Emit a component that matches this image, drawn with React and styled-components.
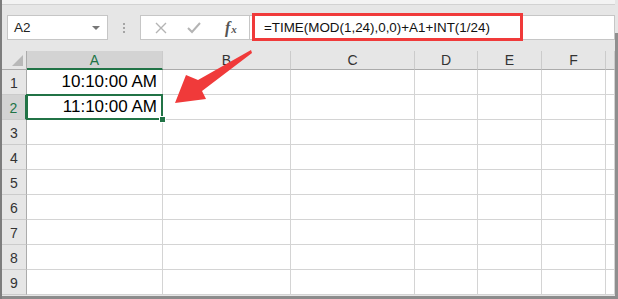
import React from 'react'
import styled, { createGlobalStyle } from 'styled-components'

const GlobalStyle = createGlobalStyle`
  html, body { margin: 0; padding: 0; background: #fff; }
  body { font-family: "Liberation Sans", Arial, sans-serif; }
`

const columns = [
  { name: 'A', width: 136 },
  { name: 'B', width: 128 },
  { name: 'C', width: 124 },
  { name: 'D', width: 63 },
  { name: 'E', width: 64 },
  { name: 'F', width: 64 },
  { name: '', width: 9 },
]

const rows = [
  { n: 1, a: '10:10:00 AM' },
  { n: 2, a: '11:10:00 AM', active: true },
  { n: 3 }, { n: 4 }, { n: 5 }, { n: 6 }, { n: 7 }, { n: 8 }, { n: 9 },
]

const Window = styled.div`
  position: relative;
  width: 618px;
  height: 299px;
  overflow: hidden;
  display: flex;
  flex-direction: column;
  background: #e6e6e6;
  border-left: 2px solid #7d7d7d;
  box-sizing: border-box;
`

const TopStrip = styled.div`
  height: 4px;
  background: #f3f3f3;
  border-bottom: 1px solid #d2d2d2;
  margin-right: 3px;
`

const Toolbar = styled.div`
  display: flex;
  align-items: flex-start;
  height: 46px;
  padding: 10px 3px 0 5px;
  box-sizing: border-box;
`

const NameBox = styled.div`
  width: 101px;
  height: 25px;
  box-sizing: border-box;
  background: #fff;
  border: 1px solid #c6c6c6;
  display: flex;
  align-items: center;
  justify-content: space-between;
  padding: 0 7px 0 6px;
  font-size: 13.5px;
  color: #222;
`

const Caret = styled.span`
  width: 0;
  height: 0;
  border-left: 4px solid transparent;
  border-right: 4px solid transparent;
  border-top: 4px solid #777;
`

const Grip = styled.div`
  width: 32px;
  height: 25px;
  display: flex;
  flex-direction: column;
  align-items: center;
  justify-content: center;
  gap: 2px;

  span {
    width: 2px;
    height: 2px;
    background: #a5a5a5;
  }
`

const FxGroup = styled.div`
  width: 109px;
  height: 25px;
  box-sizing: border-box;
  background: #fff;
  border: 1px solid #c6c6c6;
  border-right: none;
  display: flex;
  align-items: center;
  padding-left: 14px;
  gap: 20px;
`

const Fx = styled.span`
  font-family: "Liberation Serif", "Times New Roman", serif;
  font-style: italic;
  font-weight: bold;
  font-size: 16px;
  color: #555;
  margin-left: 4px;

  sub {
    font-size: 11px;
    vertical-align: baseline;
    margin-left: 1px;
  }
`

const FormulaBar = styled.div`
  position: relative;
  flex: 1;
  height: 25px;
  box-sizing: border-box;
  background: #fff;
  border: 1px solid #c6c6c6;
  display: flex;
  align-items: center;
  padding-left: 14px;
  font-size: 13.4px;
  color: #111;
`

const Callout = styled.div`
  position: absolute;
  left: 2px;
  top: -3px;
  width: 271px;
  height: 28px;
  box-sizing: border-box;
  border: 3px solid #f03a3a;
`

const SheetArea = styled.div`
  flex: 1;
  display: flex;
  flex-direction: column;
  border-right: 3px solid #8f8f8f;
  border-bottom: 3px solid #8c8c8c;
  margin-top: -18px;
  padding-top: 18px;
  position: relative;
`

const Grid = styled.div`
  display: grid;
  grid-template-columns: 25px ${columns.map(c => c.width + 'px').join(' ')};
  grid-auto-rows: 25px;
  grid-template-rows: 19px;
  background: #fff;
`

const Corner = styled.div`
  background: #e6e6e6;
  border-right: 1px solid #ababab;
  border-bottom: 1px solid #ababab;
  position: relative;

  &::after {
    content: '';
    position: absolute;
    right: 3px;
    bottom: 3px;
    border-left: 11px solid transparent;
    border-bottom: 11px solid #b8b8b8;
  }
`

const ColHead = styled.div`
  background: ${p => (p.$active ? '#d3d3d3' : '#e6e6e6')};
  color: ${p => (p.$active ? '#217346' : '#333')};
  border-right: 1px solid #cbcbcb;
  border-bottom: ${p => (p.$active ? '2px solid #217346' : '1px solid #ababab')};
  display: flex;
  align-items: center;
  justify-content: center;
  font-size: 14px;
`

const RowHead = styled.div`
  background: ${p => (p.$active ? '#d3d3d3' : '#e6e6e6')};
  color: ${p => (p.$active ? '#217346' : '#333')};
  border-right: ${p => (p.$active ? '2px solid #217346' : '1px solid #ababab')};
  border-bottom: 1px solid #cbcbcb;
  display: flex;
  align-items: center;
  justify-content: center;
  font-size: 14px;
  padding-top: 2px;
  box-sizing: border-box;
`

const Cell = styled.div`
  position: relative;
  border-right: 1px solid #d4d4d4;
  border-bottom: 1px solid #d4d4d4;
  display: flex;
  align-items: flex-end;
  justify-content: flex-end;
  padding: 0 5px 2px 0;
  box-sizing: border-box;
  font-size: 17px;
  color: #000;
  white-space: nowrap;
  z-index: ${p => (p.$selected ? 2 : 'auto')};

  ${p => p.$selected && `
    &::before {
      content: '';
      position: absolute;
      left: -1px;
      top: -1px;
      right: -1px;
      bottom: -1px;
      border: 2px solid #217346;
    }
    &::after {
      content: '';
      position: absolute;
      right: -4px;
      bottom: -4px;
      width: 5px;
      height: 5px;
      background: #217346;
      border: 1px solid #fff;
    }
  `}
`

const Arrow = styled.svg`
  position: absolute;
  left: 0;
  top: 0;
  pointer-events: none;
  z-index: 5;
`

const Cross = () => (
  <svg width="12" height="12" viewBox="0 0 12 12">
    <path d="M1 1 L11 11 M11 1 L1 11" stroke="#b4b4b4" strokeWidth="1.4" />
  </svg>
)

const Check = () => (
  <svg width="14" height="12" viewBox="0 0 14 12">
    <path d="M1 6 L5 10 L13 1" stroke="#b4b4b4" strokeWidth="2" fill="none" />
  </svg>
)

export default function App() {
  return (
    <>
      <GlobalStyle />
      <Window>
        <TopStrip />
        <Toolbar>
          <NameBox>
            A2
            <Caret />
          </NameBox>
          <Grip>
            <span />
            <span />
            <span />
          </Grip>
          <FxGroup>
            <Cross />
            <Check />
            <Fx>f<sub>x</sub></Fx>
          </FxGroup>
          <FormulaBar>
            =TIME(MOD(1,24),0,0)+A1+INT(1/24)
            <Callout />
          </FormulaBar>
        </Toolbar>
        <SheetArea>
          <Grid>
            <Corner />
            {columns.map((c, i) => (
              <ColHead key={i} $active={c.name === 'A'}>{c.name}</ColHead>
            ))}
            {rows.map(r => (
              <React.Fragment key={r.n}>
                <RowHead $active={r.active}>{r.n}</RowHead>
                {columns.map((c, i) => (
                  <Cell key={i} $selected={r.active && i === 0}>
                    {i === 0 ? r.a : null}
                  </Cell>
                ))}
              </React.Fragment>
            ))}
          </Grid>
        </SheetArea>
        <Arrow width="618" height="299" viewBox="0 0 618 299">
          <polygon
            points="249,50 196,80 184,75 173,103 204,99 200,91 250,53"
            fill="#f03a3a"
          />
        </Arrow>
      </Window>
    </>
  )
}
